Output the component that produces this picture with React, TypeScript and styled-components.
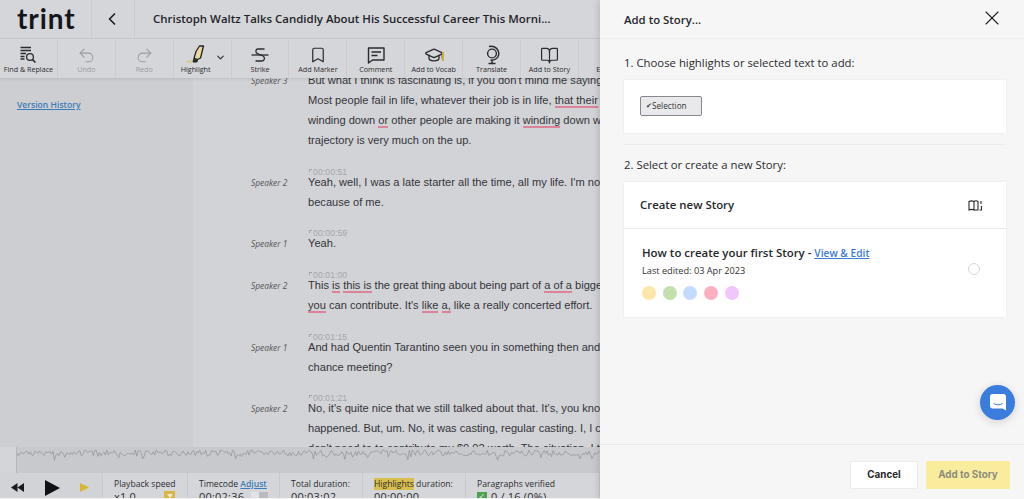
import React from "react";
import styled, { createGlobalStyle } from "styled-components";
import { ChevronDown, ChevronLeft, X, Undo2, Redo2, Bookmark, BookOpen, GraduationCap } from "lucide-react";

const Global = createGlobalStyle`
  html, body { margin: 0; padding: 0; background: #f6f6f6; }
  body { font-family: "Open Sans", sans-serif; overflow: hidden; }
  #root { width: 1024px; height: 499px; overflow: hidden; }
`;

const Page = styled.div`
  display: flex;
  width: 1024px;
  height: 499px;
  overflow: hidden;
`;
const AppPane = styled.div`
  width: 600px;
  flex: none;
  display: flex;
  flex-direction: column;
  overflow: hidden;
  background: #d2d3d7;
  border-bottom: 1px solid #f2f2f2;
  box-sizing: border-box;
`;
const TopBar = styled.header`
  height: 39px;
  flex: none;
  display: flex;
  align-items: stretch;
  background: #d5d6da;
  border-bottom: 1px solid #cbccd0;
  box-sizing: border-box;
`;
const Logo = styled.div`
  width: 92px;
  flex: none;
  border-right: 1px solid #cbccd0;
  padding-left: 17px;
  box-sizing: border-box;
  font: 700 28px/37px "Lato", sans-serif;
  letter-spacing: 0.9px;
  color: #15161a;
`;
const Back = styled.div`
  width: 43px;
  flex: none;
  display: flex;
  align-items: center;
  justify-content: center;
  border-right: 1px solid #cbccd0;
  color: #1c1d21;
  padding-right: 2px;
  box-sizing: border-box;
`;
const DocTitle = styled.div`
  padding-left: 18px;
  font: 600 11.45px/37px "Open Sans", sans-serif;
  color: #222327;
  white-space: nowrap;
`;
const Toolbar = styled.nav`
  height: 39px;
  flex: none;
  display: flex;
  background: #d5d6da;
  box-shadow: 0 1px 3px rgba(0, 0, 0, 0.1);
  position: relative;
  z-index: 1;
`;
const ToolButton = styled.div<{ $off?: boolean; $caret?: boolean }>`
  width: 57.9px;
  flex: none;
  box-sizing: border-box;
  border-right: 1px solid #cbccd0;
  display: flex;
  flex-direction: column;
  align-items: center;
  padding: 6px ${(p) => (p.$caret ? 13 : 0)}px 0 0;
  position: relative;
  color: ${(p) => (p.$off ? "#9b9ca0" : "#2a2b2f")};
`;
const IconSlot = styled.div`
  height: 20px;
  display: flex;
  align-items: center;
  justify-content: center;
`;
const ToolLabel = styled.span`
  font: 400 7.2px/10px "Open Sans", sans-serif;
  margin-top: -1px;
  white-space: nowrap;
`;
const Caret = styled.div`
  position: absolute;
  right: 5px;
  top: 13px;
  display: flex;
`;
const Body = styled.main`
  flex: 1;
  min-height: 0;
  display: flex;
  overflow: hidden;
`;
const Side = styled.aside`
  width: 193px;
  flex: none;
  padding: 21px 0 0 17px;
  box-sizing: border-box;
  background: #cdced2;
`;
const VersionLink = styled.a`
  display: block;
  font: 600 8.6px/12px "Open Sans", sans-serif;
  color: #3a7cb8;
  text-decoration: underline;
`;
const Transcript = styled.section`
  flex: 1;
  min-width: 0;
  margin-top: -8px;
  padding-left: 58px;
  overflow: hidden;
`;
const Para = styled.div`
  display: grid;
  grid-template-columns: 57px 1fr;
  margin-bottom: 16.2px;
  &:first-child { margin-bottom: 17px; }
`;
const Stamp = styled.div`
  grid-column: 2;
  font: 400 8.6px/10px "Liberation Sans", sans-serif;
  color: #a5a6aa;
  margin-bottom: -5px;
  padding-left: 5px;
  position: relative;
  letter-spacing: 0.1px;
  &::before {
    content: "";
    position: absolute;
    left: 1px;
    top: 2px;
    width: 2px;
    height: 2px;
    border-left: 1px solid #a5a6aa;
    border-top: 1px solid #a5a6aa;
  }
`;
const SpeakerName = styled.div`
  grid-column: 1;
  font: italic 400 8.4px/20px "Open Sans", sans-serif;
  color: #55565a;
  padding-top: 1px;
`;
const Lines = styled.div`
  grid-column: 2;
  font: 400 11.1px/20px "Liberation Sans", sans-serif;
  color: #333438;
  white-space: nowrap;
`;
const Line = styled.div`
  height: 20px;
`;
const Flag = styled.span`
  border-bottom: 2px solid #dd829b;
`;
const WaveBar = styled.div`
  height: 26px;
  flex: none;
  display: flex;
  background: #c8c9cd;
`;
const WaveHead = styled.div`
  width: 16px;
  flex: none;
  background: #d4d5d9;
  border-right: 1px solid #b5b6ba;
`;
const Status = styled.footer`
  height: 25px;
  flex: none;
  display: flex;
  background: #d5d6da;
  overflow: hidden;
`;
const Transport = styled.div`
  width: 103px;
  flex: none;
  display: flex;
  align-items: center;
  gap: 20px;
  padding: 4px 0 0 11px;
  box-sizing: border-box;
  background: #d2d3d7;
  border-right: 1px solid #c8c9cd;
`;
const Stat = styled.div<{ $w: number }>`
  width: ${(p) => p.$w}px;
  flex: none;
  box-sizing: border-box;
  padding: 5px 0 0 11px;
  border-right: 1px solid #c8c9cd;
  color: #2b2c30;
`;
const StatLabel = styled.div`
  font: 400 8.6px/12px "Open Sans", sans-serif;
  white-space: nowrap;
  a { color: #3a7cb8; text-decoration: underline; font-weight: 600; }
`;
const HighlightWord = styled.span`
  background: #d8bf4e;
`;
const StatValue = styled.div`
  font: 400 11px/14px "Open Sans", sans-serif;
  display: flex;
  align-items: flex-start;
  letter-spacing: 0.2px;
  white-space: nowrap;
  position: relative;
`;
const SpeedBox = styled.span`
  position: absolute;
  left: 50px;
  top: 1px;
  width: 11px;
  height: 12px;
  background: #d9b643;
  &::after {
    content: "";
    position: absolute;
    left: 3px;
    top: 3px;
    border-left: 3px solid transparent;
    border-right: 3px solid transparent;
    border-top: 4px solid #efeadb;
  }
`;
const Toggle = styled.span`
  position: absolute;
  left: 52px;
  top: 2px;
  width: 17px;
  height: 10px;
  background: #b9babe;
  &::before {
    content: "";
    position: absolute;
    left: 0;
    top: 0;
    width: 8px;
    height: 10px;
    background: #e2e3e6;
  }
`;
const VerifiedBox = styled.span`
  width: 10px;
  height: 10px;
  margin: 2px 4px 0 0;
  background: #4da04e;
  color: #e8f2e8;
  font: 700 8px/10px "DejaVu Sans", sans-serif;
  text-align: center;
`;
const Drawer = styled.aside`
  flex: 1;
  min-width: 0;
  position: relative;
  display: flex;
  flex-direction: column;
  background: #f6f6f6;
  box-shadow: -2px 0 6px rgba(0, 0, 0, 0.12);
  z-index: 2;
`;
const DrawerHead = styled.div`
  height: 39px;
  flex: none;
  box-sizing: border-box;
  display: flex;
  align-items: center;
  justify-content: space-between;
  padding: 0 20px 2px 24px;
  border-bottom: 1px solid #efefef;
  font: 600 11.4px/14px "Open Sans", sans-serif;
  color: #26272b;
  span { padding-top: 3px; }
`;
const DrawerMain = styled.div`
  flex: 1;
  min-height: 0;
  padding: 0 18px 0 24px;
`;
const StepLabel = styled.div<{ $top: number }>`
  font: 400 11.35px/16px "Open Sans", sans-serif;
  color: #2a2b2f;
  padding-top: ${(p) => p.$top}px;
  margin-bottom: 9px;
`;
const Card = styled.div`
  background: #fff;
  box-shadow: 0 0 2px rgba(0, 0, 0, 0.08);
`;
const SelectionCard = styled(Card)`
  height: 53px;
  padding: 16px;
  box-sizing: border-box;
`;
const SelectionChip = styled.div`
  width: 62px;
  height: 20px;
  box-sizing: border-box;
  background: #e9e9eb;
  border: 1px solid #85888f;
  border-radius: 2px;
  display: flex;
  align-items: center;
  padding-left: 5px;
  font: 400 8.2px/10px "Open Sans", sans-serif;
  color: #333;
`;
const SelectionTick = styled.span`
  font-size: 6.5px;
`;
const Rule = styled.div`
  height: 1px;
  background: #ececec;
  margin-top: 11px;
`;
const CreateRow = styled.div`
  height: 46px;
  display: flex;
  align-items: center;
  justify-content: space-between;
  padding: 0 23px 0 16px;
  border-bottom: 1px solid #eaeaea;
  font: 600 11.4px/14px "Open Sans", sans-serif;
  color: #26272b;
`;
const StoryRow = styled.div`
  height: 88px;
  display: flex;
  align-items: flex-start;
  justify-content: space-between;
  padding: 17px 25px 0 18px;
  box-sizing: border-box;
`;
const StoryTitle = styled.div`
  font: 600 11.45px/14px "Open Sans", sans-serif;
  color: #26272b;
  white-space: nowrap;
  a { color: #3a7bd5; text-decoration: underline; font-size: 10.2px; }
`;
const StoryMeta = styled.div`
  font: 400 9.2px/12px "Open Sans", sans-serif;
  color: #333;
  margin-top: 5px;
`;
const Dots = styled.div`
  display: flex;
  gap: 6.7px;
  margin-top: 9px;
`;
const Dot = styled.span<{ $c: string }>`
  width: 14px;
  height: 14px;
  border-radius: 50%;
  background: ${(p) => p.$c};
`;
const Radio = styled.span`
  width: 10px;
  height: 10px;
  margin: 17px 1px 0 0;
  border: 1.5px solid #d6d6d6;
  border-radius: 50%;
  background: #fff;
`;
const Fab = styled.div`
  position: absolute;
  left: 380px;
  top: 385px;
  width: 35px;
  height: 35px;
  border-radius: 50%;
  background: #3b7ddd;
  box-shadow: 0 2px 10px rgba(0, 0, 0, 0.15);
  display: flex;
  align-items: center;
  justify-content: center;
`;
const DrawerFoot = styled.div`
  height: 55px;
  flex: none;
  box-sizing: border-box;
  border-top: 1px solid #e9e9e9;
  display: flex;
  justify-content: flex-end;
  gap: 8px;
  padding: 16px 14px 0 0;
`;
const FootButton = styled.div<{ $primary?: boolean }>`
  width: ${(p) => (p.$primary ? 84 : 68)}px;
  height: 28px;
  box-sizing: border-box;
  display: flex;
  align-items: center;
  justify-content: center;
  background: ${(p) => (p.$primary ? "#f9ec9c" : "#fff")};
  border: 1px solid ${(p) => (p.$primary ? "#f9ec9c" : "#ececec")};
  color: ${(p) => (p.$primary ? "#8e8d7c" : "#26272b")};
  font: 700 9.8px/12px "Inter", sans-serif;
`;
const VocabWrap = styled.div`
  position: relative;
  display: flex;
`;
const VocabTassel = styled.span`
  position: absolute;
  right: 0;
  top: 7px;
  width: 2px;
  height: 9px;
  background: #cdae3d;
`;

const wavePath = (() => {
  let seed = 17;
  const rnd = () => {
    seed = (seed * 9301 + 49297) % 233280;
    return seed / 233280;
  };
  let d = "M0 6";
  for (let x = 1.5; x < 584; x += 1.5) {
    const y = 3 + rnd() * 6 + (rnd() > 0.86 ? rnd() * 6 : 0);
    d += ` L${x} ${y.toFixed(1)}`;
  }
  return d;
})();

const FindIcon = () => (
  <svg width="20" height="20" viewBox="0 0 20 20" fill="none" stroke="currentColor" strokeWidth="1.3">
    <path d="M2.5 2.5H13M2.5 5.5H13M2.5 8.5H8M2.5 11.5H6.5M2.5 14H6.5" />
    <circle cx="12" cy="12" r="3.4" />
    <path d="M14.5 14.6L17.5 17.5" strokeWidth="1.6" />
  </svg>
);
const HighlightIcon = () => (
  <svg width="20" height="20" viewBox="0 0 20 20" fill="none">
    <path d="M0 16.5H7" stroke="#dcc98a" strokeWidth="2" />
    <path d="M10 6.5L13.5 1H17.5L14.5 13L11.5 14.5L8 13.5Z" fill="#e7d9a0" stroke="#222" strokeWidth="1.3" strokeLinejoin="round" />
    <path d="M8 13.5L7 17L11 17L11.5 14.5Z" fill="#333" stroke="#222" />
  </svg>
);
const StrikeIcon = () => (
  <svg width="20" height="20" viewBox="0 0 20 20" fill="none" stroke="currentColor" strokeWidth="1.3">
    <path d="M14.5 4H8C5.5 4 5 7.5 7.5 8.6L13 11C15.5 12.2 14.5 16 12 16H5.5" />
    <path d="M1.5 10H18.5" />
  </svg>
);
const CommentIcon = () => (
  <svg width="20" height="20" viewBox="0 0 20 20" fill="none" stroke="currentColor" strokeWidth="1.4">
    <path d="M2.5 3H18V15H6.5L2.5 18Z" strokeLinejoin="round" />
    <path d="M5.5 7H15M5.5 10.5H11.5" />
  </svg>
);
const VocabIcon = () => (
  <VocabWrap>
    <GraduationCap size={20} strokeWidth={1.6} />
    <VocabTassel />
  </VocabWrap>
);
const GlobeIcon = () => (
  <svg width="20" height="20" viewBox="0 0 20 20" fill="none" stroke="currentColor" strokeWidth="1.4">
    <circle cx="10" cy="8.5" r="4.4" />
    <path d="M7 1.5C13 0 18 5 16.5 10.5C15.5 14 12 15.5 8.5 15" />
    <path d="M10 15V18M6.5 18.5H13.5" />
  </svg>
);
const NewStoryIcon = () => (
  <svg width="15" height="13" viewBox="0 0 15 13" fill="none" stroke="#2a2b2f" strokeWidth="1.1">
    <path d="M1 2.5C2.5 1.7 4.5 1.7 6 2.5V11C4.5 10.3 2.5 10.3 1 11Z" />
    <path d="M6 2.5C7 1.7 9 1.7 10 2.5V11H6" />
    <path d="M13 2V5M11.6 11H13.5V7" />
  </svg>
);

const tools = [
  { label: "Find & Replace", icon: <FindIcon /> },
  { label: "Undo", icon: <Undo2 size={19} strokeWidth={1.3} />, off: true },
  { label: "Redo", icon: <Redo2 size={19} strokeWidth={1.3} />, off: true },
  { label: "Highlight", icon: <HighlightIcon />, caret: true },
  { label: "Strike", icon: <StrikeIcon /> },
  { label: "Add Marker", icon: <Bookmark size={18} strokeWidth={1.6} /> },
  { label: "Comment", icon: <CommentIcon /> },
  { label: "Add to Vocab", icon: <VocabIcon /> },
  { label: "Translate", icon: <GlobeIcon /> },
  { label: "Add to Story", icon: <BookOpen size={19} strokeWidth={1.5} /> },
  { label: "Export", icon: null },
];

const paragraphs: { speaker: string; stamp?: string; lines: React.ReactNode[] }[] = [
  {
    speaker: "Speaker 3",
    lines: [
      "But what I think is fascinating is, if you don't mind me saying",
      <>Most people fail in life, whatever their job is in life, <Flag>that their</Flag> career</>,
      <>winding down <Flag>or</Flag> other people are making it <Flag>winding</Flag> down while</>,
      "trajectory is very much on the up.",
    ],
  },
  {
    speaker: "Speaker 2",
    stamp: "00:00:51",
    lines: ["Yeah, well, I was a late starter all the time, all my life. I'm not", "because of me."],
  },
  { speaker: "Speaker 1", stamp: "00:00:59", lines: ["Yeah."] },
  {
    speaker: "Speaker 2",
    stamp: "00:01:00",
    lines: [
      <>This <Flag>is</Flag> <Flag>this is</Flag> the great thing about being part of <Flag>a of a</Flag> bigger</>,
      <><Flag>you</Flag> can contribute. It's <Flag>like</Flag> <Flag>a,</Flag> like a really concerted effort.</>,
    ],
  },
  {
    speaker: "Speaker 1",
    stamp: "00:01:15",
    lines: ["And had Quentin Tarantino seen you in something then and", "chance meeting?"],
  },
  {
    speaker: "Speaker 2",
    stamp: "00:01:21",
    lines: [
      "No, it's quite nice that we still talked about that. It's, you know",
      "happened. But, um. No, it was casting, regular casting. I, I can",
      "don't need to to contribute my $0.02 worth. The situation, I think",
    ],
  },
];

export default function App() {
  return (
    <Page>
      <Global />
      <AppPane>
        <TopBar>
          <Logo>trint</Logo>
          <Back><ChevronLeft size={20} strokeWidth={2} /></Back>
          <DocTitle>Christoph Waltz Talks Candidly About His Successful Career This Morni...</DocTitle>
        </TopBar>
        <Toolbar>
          {tools.map((t) => (
            <ToolButton key={t.label} $off={t.off} $caret={t.caret}>
              <IconSlot>{t.icon}</IconSlot>
              <ToolLabel>{t.label}</ToolLabel>
              {t.caret && <Caret><ChevronDown size={11} strokeWidth={2.4} /></Caret>}
            </ToolButton>
          ))}
        </Toolbar>
        <Body>
          <Side><VersionLink>Version History</VersionLink></Side>
          <Transcript>
            {paragraphs.map((p, i) => (
              <Para key={i}>
                {p.stamp && <Stamp>{p.stamp}</Stamp>}
                <SpeakerName>{p.speaker}</SpeakerName>
                <Lines>{p.lines.map((l, j) => <Line key={j}>{l}</Line>)}</Lines>
              </Para>
            ))}
          </Transcript>
        </Body>
        <WaveBar>
          <WaveHead />
          <svg width="584" height="26" viewBox="0 0 584 26" fill="none">
            <path d={wavePath} stroke="#8f9094" strokeWidth="0.7" />
          </svg>
        </WaveBar>
        <Status>
          <Transport>
            <svg width="13" height="9" viewBox="0 0 13 9" fill="#1a1b1f"><path d="M6.5 0V9L0 4.5ZM13 0V9L6.5 4.5Z" /></svg>
            <svg width="16" height="16" viewBox="0 0 16 16" fill="#111216"><path d="M1 0L16 8L1 16Z" /></svg>
            <svg width="9" height="9" viewBox="0 0 9 9" fill="#dab52f"><path d="M0 0L9 4.5L0 9Z" /></svg>
          </Transport>
          <Stat $w={85}>
            <StatLabel>Playback speed</StatLabel>
            <StatValue>x1.0<SpeedBox /></StatValue>
          </Stat>
          <Stat $w={92}>
            <StatLabel>Timecode <a>Adjust</a></StatLabel>
            <StatValue>00:02:36<Toggle /></StatValue>
          </Stat>
          <Stat $w={83}>
            <StatLabel>Total duration:</StatLabel>
            <StatValue>00:03:02</StatValue>
          </Stat>
          <Stat $w={103}>
            <StatLabel><HighlightWord>Highlights</HighlightWord> duration:</StatLabel>
            <StatValue>00:00:00</StatValue>
          </Stat>
          <Stat $w={134}>
            <StatLabel>Paragraphs verified</StatLabel>
            <StatValue><VerifiedBox>✓</VerifiedBox>0 / 16 (0%)</StatValue>
          </Stat>
        </Status>
      </AppPane>
      <Drawer>
        <DrawerHead>
          <span>Add to Story...</span>
          <X size={24} strokeWidth={1.1} color="#222" />
        </DrawerHead>
        <DrawerMain>
          <StepLabel $top={16}>1. Choose highlights or selected text to add:</StepLabel>
          <SelectionCard>
            <SelectionChip><SelectionTick>✔</SelectionTick>Selection</SelectionChip>
          </SelectionCard>
          <Rule />
          <StepLabel $top={12}>2. Select or create a new Story:</StepLabel>
          <Card>
            <CreateRow>
              <span>Create new Story</span>
              <NewStoryIcon />
            </CreateRow>
            <StoryRow>
              <div>
                <StoryTitle>How to create your first Story - <a>View &amp; Edit</a></StoryTitle>
                <StoryMeta>Last edited: 03 Apr 2023</StoryMeta>
                <Dots>
                  {["#fde7a8", "#c3dfae", "#c5daff", "#ffafc2", "#f2c6fc"].map((c) => <Dot key={c} $c={c} />)}
                </Dots>
              </div>
              <Radio />
            </StoryRow>
          </Card>
        </DrawerMain>
        <DrawerFoot>
          <FootButton>Cancel</FootButton>
          <FootButton $primary>Add to Story</FootButton>
        </DrawerFoot>
        <Fab>
          <svg width="16" height="17" viewBox="0 0 16 17">
            <path d="M2.5 0H13.5C15 0 16 1 16 2.5V16.5L12.5 14.5H2.5C1 14.5 0 13.5 0 12V2.5C0 1 1 0 2.5 0Z" fill="#fff" />
            <path d="M3.5 9.5C6 11.3 10 11.3 12.5 9.5" stroke="#3b7ddd" strokeWidth="1" fill="none" />
          </svg>
        </Fab>
      </Drawer>
    </Page>
  );
}
